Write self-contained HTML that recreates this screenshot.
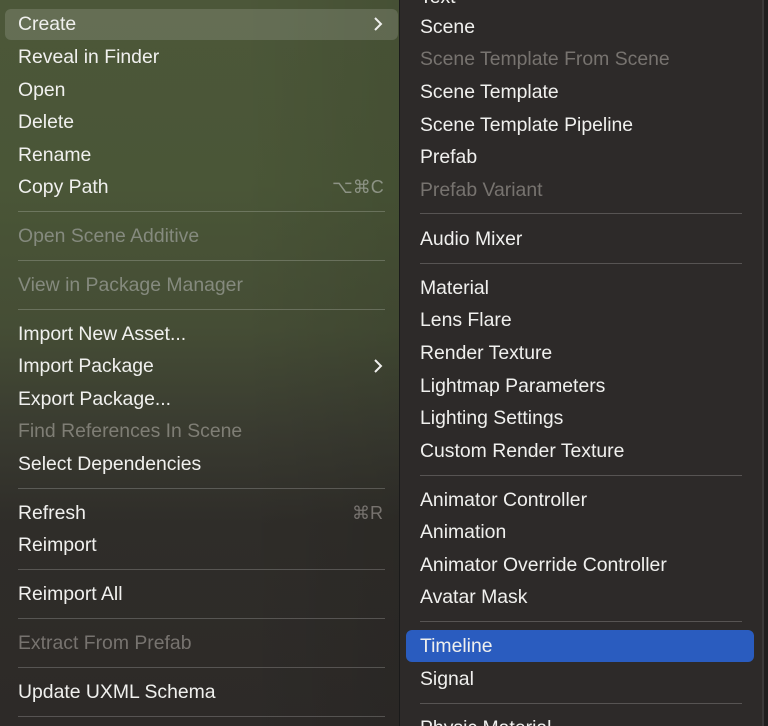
<!DOCTYPE html>
<html><head><meta charset="utf-8"><style>
html,body{margin:0;padding:0;width:768px;height:726px;overflow:hidden;}
body{position:relative;background:#1f1e1e;font-family:"Liberation Sans",sans-serif;}
#left{position:absolute;left:0;top:0;width:399px;height:726px;
background:linear-gradient(180deg,#4c5739 0%,#4a5637 25%,#454d35 45%,#393a30 60%,#2f2d29 72%,#2d2a28 100%);}
#left::after{content:"";position:absolute;inset:0;background:linear-gradient(90deg,rgba(0,0,0,0) 60%,rgba(0,0,0,0.08) 100%);}
#lborder{position:absolute;left:399px;top:0;width:1px;height:726px;background:#1a1a1a;}
#right{position:absolute;left:400px;top:0;width:362px;height:726px;background:#2d2a29;overflow:hidden;}
#rb{position:absolute;left:762px;top:0;width:2px;height:726px;background:#3a3838;}
.t{position:absolute;font-size:19.4px;line-height:22px;color:#f0f0ee;white-space:nowrap;z-index:2;}
.d{color:#858a7e;}
.dr{color:#77736f;}
.s{position:absolute;height:1px;background:rgba(255,255,255,0.2);z-index:2;}
.hl{position:absolute;border-radius:6px;z-index:1;}
.k{position:absolute;color:#8d9385;font-size:18px;line-height:22px;z-index:2;}
.ar{position:absolute;z-index:2;}
#right .t{left:20px;}
#right .s{left:20px;width:322px;}
</style></head><body>
<div id="left"></div><div id="lborder"></div>
<div id="rb"></div>

<div class="hl" style="left:5px;top:9px;width:393px;height:31px;background:rgba(255,255,255,0.14)"></div>
<div class="t" style="left:18px;top:13px">Create</div>
<svg class="ar" style="left:372px;top:16px" width="12" height="16"><path d="M3 2 L9 8 L3 14" stroke="#f0f0ee" stroke-width="2" fill="none"/></svg>
<div class="t" style="left:18px;top:46px">Reveal in Finder</div>
<div class="t" style="left:18px;top:79px">Open</div>
<div class="t" style="left:18px;top:111px">Delete</div>
<div class="t" style="left:18px;top:144px">Rename</div>
<div class="t" style="left:18px;top:176px">Copy Path</div>
<div class="k" style="left:332px;top:176px">⌥⌘C</div>
<div class="s" style="left:18px;top:211px;width:367px"></div>
<div class="t d" style="left:18px;top:225px">Open Scene Additive</div>
<div class="s" style="left:18px;top:260px;width:367px"></div>
<div class="t d" style="left:18px;top:274px">View in Package Manager</div>
<div class="s" style="left:18px;top:309px;width:367px"></div>
<div class="t" style="left:18px;top:323px">Import New Asset...</div>
<div class="t" style="left:18px;top:355px">Import Package</div>
<svg class="ar" style="left:372px;top:358px" width="12" height="16"><path d="M3 2 L9 8 L3 14" stroke="#f0f0ee" stroke-width="2" fill="none"/></svg>
<div class="t" style="left:18px;top:388px">Export Package...</div>
<div class="t d" style="left:18px;top:420px;color:#7f7e75">Find References In Scene</div>
<div class="t" style="left:18px;top:453px">Select Dependencies</div>
<div class="s" style="left:18px;top:488px;width:367px"></div>
<div class="t" style="left:18px;top:502px">Refresh</div>
<div class="k" style="left:352px;top:502px;color:#77736f">⌘R</div>
<div class="t" style="left:18px;top:534px">Reimport</div>
<div class="s" style="left:18px;top:569px;width:367px"></div>
<div class="t" style="left:18px;top:583px">Reimport All</div>
<div class="s" style="left:18px;top:618px;width:367px"></div>
<div class="t dr" style="left:18px;top:632px">Extract From Prefab</div>
<div class="s" style="left:18px;top:667px;width:367px"></div>
<div class="t" style="left:18px;top:681px">Update UXML Schema</div>
<div class="s" style="left:18px;top:716px;width:367px"></div>

<div id="right">
<div class="t" style="top:-14px">Text</div>
<div class="t" style="top:16px">Scene</div>
<div class="t dr" style="top:48px">Scene Template From Scene</div>
<div class="t" style="top:81px">Scene Template</div>
<div class="t" style="top:114px">Scene Template Pipeline</div>
<div class="t" style="top:146px">Prefab</div>
<div class="t dr" style="top:179px">Prefab Variant</div>
<div class="s" style="top:213px"></div>
<div class="t" style="top:228px">Audio Mixer</div>
<div class="s" style="top:263px"></div>
<div class="t" style="top:277px">Material</div>
<div class="t" style="top:309px">Lens Flare</div>
<div class="t" style="top:342px">Render Texture</div>
<div class="t" style="top:375px">Lightmap Parameters</div>
<div class="t" style="top:407px">Lighting Settings</div>
<div class="t" style="top:440px">Custom Render Texture</div>
<div class="s" style="top:475px"></div>
<div class="t" style="top:489px">Animator Controller</div>
<div class="t" style="top:521px">Animation</div>
<div class="t" style="top:554px">Animator Override Controller</div>
<div class="t" style="top:586px">Avatar Mask</div>
<div class="s" style="top:621px"></div>
<div class="hl" style="left:6px;top:630px;width:348px;height:32px;background:#2a5cbf"></div>
<div class="t" style="top:635px">Timeline</div>
<div class="t" style="top:668px">Signal</div>
<div class="s" style="top:703px"></div>
<div class="t" style="top:717px">Physic Material</div>
</div>
</body></html>
